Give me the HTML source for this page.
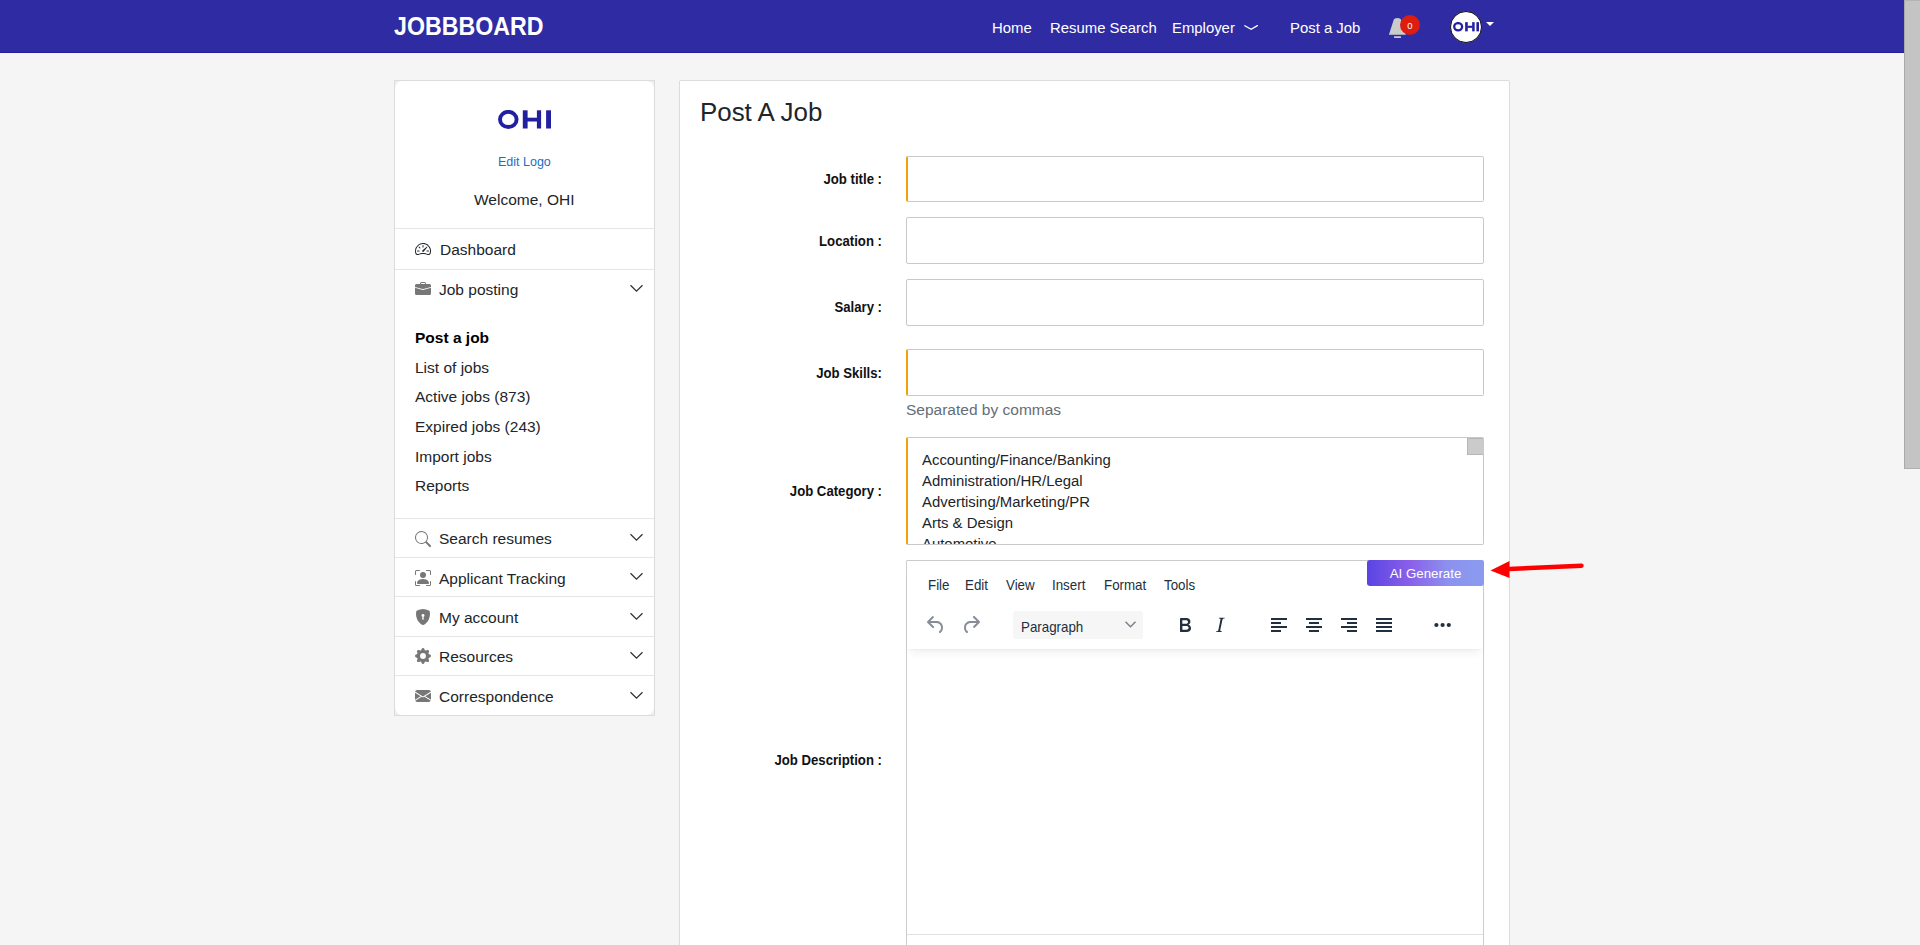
<!DOCTYPE html>
<html><head><meta charset="utf-8">
<style>
*{box-sizing:border-box;margin:0;padding:0}
html,body{width:1920px;height:945px;overflow:hidden;background:#f5f5f5;font-family:"Liberation Sans",sans-serif;color:#212529}
.a{position:absolute;white-space:nowrap}
#nav{position:absolute;left:0;top:0;width:1904px;height:53px;background:#2f2ca3;border-bottom:1px solid #2320a0}
#sb{position:absolute;left:1904px;top:0;width:17px;height:945px;background:#f5f5f5}
#thumb{position:absolute;left:1904px;top:0;width:16px;height:469px;background:#c4c4c4;border-left:1px solid #a9a9a9;border-bottom:1px solid #b0b0b0;border-top:1px solid #b4b4b4}
.nl{color:#fff;font-size:15.5px;line-height:20px;transform:scaleX(0.96);transform-origin:0 0}
#side{position:absolute;left:394px;top:80px;width:261px;height:636px;border:1px solid #dcdcdc;background:#f0f0f0}
#sidein{position:absolute;left:0;top:0;width:259px;height:634px;background:#fff;border-radius:8px}
.div{position:absolute;left:395px;width:259px;height:1px;background:#e6e6e6}
.si{font-size:15.5px;line-height:20px;color:#212529}
#main{position:absolute;left:679px;top:80px;width:831px;height:900px;border:1px solid #dcdcdc;background:#fff;border-radius:2px}
.lb{font-size:14.8px;font-weight:700;line-height:18px;color:#111;text-align:right;transform:scaleX(0.89);transform-origin:100% 0}
.inp{position:absolute;left:906px;width:578px;height:46px;border:1px solid #c9c9c9;border-radius:2px;background:#fff}
.or{border-left:2px solid #f2a10a}
.opt{font-size:14.9px;line-height:21px;color:#212529}
.mn{font-size:14.2px;line-height:18px;color:#222f3e;transform:scaleX(0.94);transform-origin:0 0}
</style></head><body>
<div id="nav"></div>
<div class="a" style="left:394px;top:11px;font-size:26.5px;font-weight:700;color:#fff;line-height:30px;transform:scaleX(0.875);transform-origin:0 0">JOBBBOARD</div>
<div class="a nl" style="left:992px;top:18px">Home</div>
<div class="a nl" style="left:1050px;top:18px">Resume Search</div>
<div class="a nl" style="left:1172px;top:18px">Employer</div>
<svg class="a" style="left:1244px;top:24px" width="15" height="8" viewBox="0 0 15 8"><path d="M0.8 1.8 L7.1 5.3 L13.4 1.6" stroke="#fff" stroke-width="1.3" fill="none" stroke-linecap="round"/></svg>
<div class="a nl" style="left:1290px;top:18px">Post a Job</div>


<!-- bell + badge -->
<svg class="a" style="left:1388px;top:17px" width="19" height="22" viewBox="0 0 19 22"><path d="M5.8 2.6 Q6.3 0.9 9.4 0.9 Q12.5 0.9 13 2.6 L17.9 17.7 L0.9 17.7 Z" fill="#cbcbcb"/><rect x="6" y="19.3" width="7" height="1.6" rx="0.5" fill="#cbcbcb"/></svg>
<div class="a" style="left:1400px;top:15px;width:20px;height:20px;border-radius:50%;background:#dc1d10;color:#fff;font-size:9.5px;line-height:22px;text-align:center">0</div>
<!-- avatar -->
<div class="a" style="left:1450px;top:11px;width:32px;height:32px;border-radius:50%;background:#fff;border:1px solid #111"></div>
<svg class="a" style="left:1453px;top:22px" width="26" height="9.50" viewBox="0 0 52 19"><g fill="#22209e"><ellipse cx="10.3" cy="9.45" rx="7.9" ry="7.25" fill="none" stroke="#22209e" stroke-width="4.6"/><rect x="24.3" y="0.3" width="5.2" height="18.4"/><rect x="38.3" y="0.3" width="5" height="18.4"/><rect x="29" y="7.5" width="10" height="4.2"/><rect x="46.8" y="0.3" width="5.2" height="18.4"/></g></svg>
<svg class="a" style="left:1486px;top:22px" width="8" height="4" viewBox="0 0 8 4"><path d="M0 0 L8 0 L4 4 Z" fill="#fff"/></svg>
<div id="sb"></div><div id="thumb"></div>

<div id="side"><div id="sidein"></div></div>
<div class="div" style="top:228px"></div>
<div class="div" style="top:269px"></div>
<div class="div" style="top:518px"></div>
<div class="div" style="top:557px"></div>
<div class="div" style="top:596px"></div>
<div class="div" style="top:636px"></div>
<div class="div" style="top:675px"></div>

<svg class="a" style="left:498px;top:110.4px" width="53.00" height="19.00" viewBox="0 0 53 19"><g fill="#22209e"><ellipse cx="10.3" cy="9.45" rx="8.3" ry="7.6" fill="none" stroke="#22209e" stroke-width="3.9"/><rect x="24.8" y="0.3" width="4.8" height="18.2"/><rect x="38.9" y="0.3" width="4.2" height="18.2"/><rect x="29" y="7.7" width="10.5" height="3.8"/><rect x="48.1" y="0.3" width="4.9" height="18.2"/></g></svg>
<div class="a" style="left:498px;top:154px;font-size:12.5px;color:#1a6dc9;line-height:16px">Edit Logo</div>
<div class="a si" style="left:474px;top:190px">Welcome, OHI</div>

<div class="a si" style="left:440px;top:240px">Dashboard</div>
<div class="a si" style="left:439px;top:280px">Job posting</div>
<div class="a si" style="left:415px;top:328px;font-weight:700;color:#000">Post a job</div>
<div class="a si" style="left:415px;top:358px">List of jobs</div>
<div class="a si" style="left:415px;top:387px">Active jobs (873)</div>
<div class="a si" style="left:415px;top:417px">Expired jobs (243)</div>
<div class="a si" style="left:415px;top:447px">Import jobs</div>
<div class="a si" style="left:415px;top:476px">Reports</div>
<div class="a si" style="left:439px;top:529px">Search resumes</div>
<div class="a si" style="left:439px;top:569px">Applicant Tracking</div>
<div class="a si" style="left:439px;top:608px">My account</div>
<div class="a si" style="left:439px;top:647px">Resources</div>
<div class="a si" style="left:439px;top:687px">Correspondence</div>


<svg class="a" style="left:415px;top:241px" width="16" height="16" viewBox="0 0 16 16" fill="#212529"><path d="M8 4a.5.5 0 0 1 .5.5V6a.5.5 0 0 1-1 0V4.5A.5.5 0 0 1 8 4zM3.732 5.732a.5.5 0 0 1 .707 0l.915.914a.5.5 0 1 1-.708.708l-.914-.915a.5.5 0 0 1 0-.707zM2 10a.5.5 0 0 1 .5-.5h1.586a.5.5 0 0 1 0 1H2.5A.5.5 0 0 1 2 10zm9.5 0a.5.5 0 0 1 .5-.5h1.5a.5.5 0 0 1 0 1H12a.5.5 0 0 1-.5-.5zm.754-4.246a.389.389 0 0 0-.527-.02L7.547 9.31a.91.91 0 1 0 1.302 1.258l3.434-4.297a.389.389 0 0 0-.029-.518z"/><path fill-rule="evenodd" d="M0 10a8 8 0 1 1 15.547 2.661c-.442 1.253-1.845 1.602-2.932 1.25C11.309 13.488 9.475 13 8 13c-1.474 0-3.31.488-4.615.911-1.087.352-2.49.003-2.932-1.25A7.988 7.988 0 0 1 0 10zm8-7a7 7 0 0 0-6.603 9.329c.203.575.923.876 1.68.63C4.397 12.533 6.358 12 8 12s3.604.532 4.923.96c.757.245 1.477-.056 1.68-.631A7 7 0 0 0 8 3z"/></svg>
<svg class="a" style="left:415px;top:281px" width="16" height="16" viewBox="0 0 16 16" fill="#777"><path d="M6.5 1A1.5 1.5 0 0 0 5 2.5V3H1.5A1.5 1.5 0 0 0 0 4.5v1.384l7.614 2.03a1.5 1.5 0 0 0 .772 0L16 5.884V4.5A1.5 1.5 0 0 0 14.5 3H11v-.5A1.5 1.5 0 0 0 9.5 1h-3zm0 1h3a.5.5 0 0 1 .5.5V3H6v-.5a.5.5 0 0 1 .5-.5z"/><path d="M0 12.5A1.5 1.5 0 0 0 1.5 14h13a1.5 1.5 0 0 0 1.5-1.5V6.85L8.129 8.947a.5.5 0 0 1-.258 0L0 6.85v5.65z"/></svg>
<svg class="a" style="left:415px;top:530.5px" width="16" height="16" viewBox="0 0 16 16" fill="#777"><path d="M11.742 10.344a6.5 6.5 0 1 0-1.397 1.398h-.001c.03.04.062.078.098.115l3.85 3.85a1 1 0 0 0 1.415-1.414l-3.85-3.85a1.007 1.007 0 0 0-.115-.1zM12 6.5a5.5 5.5 0 1 1-11 0 5.5 5.5 0 0 1 11 0z"/></svg>
<svg class="a" style="left:415px;top:570px" width="16" height="16" viewBox="0 0 16 16" fill="#777"><path d="M1.5 1a.5.5 0 0 0-.5.5v3a.5.5 0 0 1-1 0v-3A1.5 1.5 0 0 1 1.5 0h3a.5.5 0 0 1 0 1h-3zM11 .5a.5.5 0 0 1 .5-.5h3A1.5 1.5 0 0 1 16 1.5v3a.5.5 0 0 1-1 0v-3a.5.5 0 0 0-.5-.5h-3a.5.5 0 0 1-.5-.5zM.5 11a.5.5 0 0 1 .5.5v3a.5.5 0 0 0 .5.5h3a.5.5 0 0 1 0 1h-3A1.5 1.5 0 0 1 0 14.5v-3a.5.5 0 0 1 .5-.5zm15 0a.5.5 0 0 1 .5.5v3a1.5 1.5 0 0 1-1.5 1.5h-3a.5.5 0 0 1 0-1h3a.5.5 0 0 0 .5-.5v-3a.5.5 0 0 1 .5-.5z"/><path d="M3 14s-1 0-1-1 1-4 6-4 6 3 6 4-1 1-1 1H3zm8-9a3 3 0 1 1-6 0 3 3 0 0 1 6 0z"/></svg>
<svg class="a" style="left:415px;top:608.5px" width="16" height="16" viewBox="0 0 16 16" fill="#777"><path fill-rule="evenodd" d="M8 0c-.69 0-1.843.265-2.928.56-1.11.3-2.229.655-2.887.87a1.54 1.54 0 0 0-1.044 1.262c-.596 4.477.787 7.795 2.465 9.99a11.777 11.777 0 0 0 2.517 2.453c.386.273.744.482 1.048.625.28.132.581.24.829.24s.548-.108.829-.24a7.159 7.159 0 0 0 1.048-.625 11.775 11.775 0 0 0 2.517-2.453c1.678-2.195 3.061-5.513 2.465-9.99a1.541 1.541 0 0 0-1.044-1.263 62.467 62.467 0 0 0-2.887-.87C9.843.266 8.69 0 8 0zm0 5a1.5 1.5 0 0 1 .5 2.915l.385 1.99a.5.5 0 0 1-.491.595h-.788a.5.5 0 0 1-.49-.595l.384-1.99A1.5 1.5 0 0 1 8 5z"/></svg>
<svg class="a" style="left:415px;top:648px" width="16" height="16" viewBox="0 0 16 16" fill="#777"><path d="M9.405 1.05c-.413-1.4-2.397-1.4-2.81 0l-.1.34a1.464 1.464 0 0 1-2.105.872l-.31-.17c-1.283-.698-2.686.705-1.987 1.987l.169.311c.446.82.023 1.841-.872 2.105l-.34.1c-1.4.413-1.4 2.397 0 2.81l.34.1a1.464 1.464 0 0 1 .872 2.105l-.17.31c-.698 1.283.705 2.686 1.987 1.987l.311-.169a1.464 1.464 0 0 1 2.105.872l.1.34c.413 1.4 2.397 1.4 2.81 0l.1-.34a1.464 1.464 0 0 1 2.105-.872l.31.17c1.283.698 2.686-.705 1.987-1.987l-.169-.311a1.464 1.464 0 0 1 .872-2.105l.34-.1c1.4-.413 1.4-2.397 0-2.81l-.34-.1a1.464 1.464 0 0 1-.872-2.105l.17-.31c.698-1.283-.705-2.686-1.987-1.987l-.311.169a1.464 1.464 0 0 1-2.105-.872l-.1-.34zM8 10.93a2.929 2.929 0 1 1 0-5.86 2.929 2.929 0 0 1 0 5.858z"/></svg>
<svg class="a" style="left:415px;top:688px" width="16" height="16" viewBox="0 0 16 16" fill="#777"><path d="M.05 3.555A2 2 0 0 1 2 2h12a2 2 0 0 1 1.95 1.555L8 8.414.05 3.555ZM0 4.697v7.104l5.803-3.558L0 4.697ZM6.761 8.83l-6.57 4.027A2 2 0 0 0 2 14h12a2 2 0 0 0 1.808-1.144l-6.57-4.027L8 9.586l-1.239-.757Zm3.436-.586L16 11.801V4.697l-5.803 3.546Z"/></svg>
<svg class="a" style="left:629px;top:283.9px" width="15" height="9" viewBox="0 0 15 9"><path d="M1.5 1.2 L7.5 7.2 L13.5 1.2" stroke="#333" stroke-width="1.3" fill="none"/></svg>
<svg class="a" style="left:629px;top:532.8px" width="15" height="9" viewBox="0 0 15 9"><path d="M1.5 1.2 L7.5 7.2 L13.5 1.2" stroke="#333" stroke-width="1.3" fill="none"/></svg>
<svg class="a" style="left:629px;top:572.3px" width="15" height="9" viewBox="0 0 15 9"><path d="M1.5 1.2 L7.5 7.2 L13.5 1.2" stroke="#333" stroke-width="1.3" fill="none"/></svg>
<svg class="a" style="left:629px;top:611.9px" width="15" height="9" viewBox="0 0 15 9"><path d="M1.5 1.2 L7.5 7.2 L13.5 1.2" stroke="#333" stroke-width="1.3" fill="none"/></svg>
<svg class="a" style="left:629px;top:650.8px" width="15" height="9" viewBox="0 0 15 9"><path d="M1.5 1.2 L7.5 7.2 L13.5 1.2" stroke="#333" stroke-width="1.3" fill="none"/></svg>
<svg class="a" style="left:629px;top:690.5px" width="15" height="9" viewBox="0 0 15 9"><path d="M1.5 1.2 L7.5 7.2 L13.5 1.2" stroke="#333" stroke-width="1.3" fill="none"/></svg>
<div id="main"></div>
<div class="a" style="left:700px;top:97px;font-size:25.9px;line-height:30px;color:#212529">Post A Job</div>
<div class="a lb" style="left:700px;width:182px;top:170px">Job title :</div>
<div class="a lb" style="left:700px;width:182px;top:232px">Location :</div>
<div class="a lb" style="left:700px;width:182px;top:298px">Salary :</div>
<div class="a lb" style="left:700px;width:182px;top:364px">Job Skills:</div>
<div class="a lb" style="left:700px;width:182px;top:482px">Job Category :</div>
<div class="a lb" style="left:600px;width:282px;top:751px">Job Description :</div>

<div class="inp or" style="top:156px"></div>
<div class="inp" style="top:217px;height:47px"></div>
<div class="inp" style="top:279px;height:47px"></div>
<div class="inp or" style="top:349px;height:47px"></div>
<div class="a" style="left:906px;top:401px;font-size:15.5px;line-height:18px;color:#646d78">Separated by commas</div>
<div class="inp or" style="top:437px;height:108px;overflow:hidden">
  <div class="a opt" style="left:14px;top:12px">Accounting/Finance/Banking<br>Administration/HR/Legal<br>Advertising/Marketing/PR<br>Arts &amp; Design<br>Automotive</div>
  <div class="a" style="left:559px;top:0;width:17px;height:17px;background:#cbcbcb;border:1px solid #b6b6b6;border-right:0"></div>
</div>

<div class="a" style="left:906px;top:560px;width:578px;height:420px;border:1px solid #ccc;border-radius:1px;background:#fff"></div>
<div class="a" style="left:907px;top:561px;width:576px;height:88px;background:#fff;box-shadow:0 2px 2px -2px rgba(34,47,62,.1),0 8px 8px -4px rgba(34,47,62,.07)"></div>
<div class="a" style="left:907px;top:934px;width:576px;height:1px;background:#e0e0e0"></div>
<div class="a mn" style="left:928px;top:576px">File</div>
<div class="a mn" style="left:965px;top:576px">Edit</div>
<div class="a mn" style="left:1006px;top:576px">View</div>
<div class="a mn" style="left:1052px;top:576px">Insert</div>
<div class="a mn" style="left:1104px;top:576px">Format</div>
<div class="a mn" style="left:1164px;top:576px">Tools</div>
<svg class="a" style="left:923.7px;top:612.7px" width="24" height="24" viewBox="0 0 24 24" fill="#878d95"><path d="M6.4 8H12c3.7 0 6.2 2 6.8 5.1.6 2.7-.4 5.6-2.3 6.8a1 1 0 0 1-1-1.8c1.1-.6 1.8-2.7 1.4-4.6-.5-2.2-2.1-3.5-4.9-3.5H6.4l3.3 3.3a1 1 0 1 1-1.4 1.4l-5-5a1 1 0 0 1 0-1.4l5-5a1 1 0 0 1 1.4 1.4L6.4 8Z"/></svg>
<svg class="a" style="left:959.1px;top:612.7px" width="24" height="24" viewBox="0 0 24 24" fill="#878d95"><path d="M17.6 10H12c-2.8 0-4.4 1.4-4.9 3.5-.4 2 .3 4 1.4 4.6a1 1 0 1 1-1 1.8c-2-1.2-2.9-4.1-2.3-6.8.6-3 3-5.1 6.8-5.1h5.6l-3.3-3.3a1 1 0 1 1 1.4-1.4l5 5a1 1 0 0 1 0 1.4l-5 5a1 1 0 0 1-1.4-1.4l3.300-3.300Z"/></svg>
<div class="a" style="left:1013px;top:611px;width:130px;height:28px;background:#f6f6f7;border-radius:3px"></div>
<div class="a mn" style="left:1021px;top:618px">Paragraph</div>
<svg class="a" style="left:1124px;top:620px" width="13" height="9" viewBox="0 0 13 9"><path d="M1.5 1.8 L6.5 6.8 L11.5 1.8" stroke="#7a828c" stroke-width="1.5" fill="none"/></svg>
<svg class="a" style="left:1173px;top:613px" width="24" height="24" viewBox="0 0 24 24" fill="#222f3e"><path d="M7.8 19c-.3 0-.5 0-.6-.2l-.2-.5V5.7c0-.2 0-.4.2-.5l.6-.2h5c1.5 0 2.7.3 3.5 1 .7.6 1.1 1.4 1.1 2.5a3 3 0 0 1-.6 1.9c-.4.6-1 1-1.6 1.2.4.1.9.3 1.3.6s.8.7 1 1.2c.4.4.5 1 .5 1.6 0 1.3-.4 2.3-1.3 3-.8.7-2.1 1-3.8 1H7.8Zm5-8.3c.6 0 1.2-.1 1.6-.5.4-.3.6-.7.6-1.3 0-1.1-.8-1.7-2.3-1.7H9.3v3.5h3.4Zm.5 6c.7 0 1.3-.1 1.700-.4.4-.4.6-.9.6-1.5s-.2-1-.7-1.4c-.4-.3-1-.4-2-.4H9.400v3.800h4Z"/></svg>
<svg class="a" style="left:1208px;top:613px" width="24" height="24" viewBox="0 0 24 24" fill="#222f3e"><path d="m16.7 4.7-.1.9h-.3c-.6 0-1 0-1.4.3-.3.3-.4.6-.5 1.1l-2.1 9.8v.6c0 .5.4.8 1.4.8h.2l-.2.8H8l.2-.8h.2c1.1 0 1.8-.5 2-1.5l2-9.8.1-.5c0-.6-.4-.8-1.4-.8h-.3l.2-.9h5.8Z"/></svg>
<svg class="a" style="left:1271px;top:617px" width="16" height="16" viewBox="0 0 16 16" fill="#222f3e"><rect x="0" y="1" width="16" height="2"/><rect x="0" y="5" width="10" height="2"/><rect x="0" y="9" width="16" height="2"/><rect x="0" y="13" width="10" height="2"/></svg>
<svg class="a" style="left:1306px;top:617px" width="16" height="16" viewBox="0 0 16 16" fill="#222f3e"><rect x="0" y="1" width="16" height="2"/><rect x="3" y="5" width="10" height="2"/><rect x="0" y="9" width="16" height="2"/><rect x="3" y="13" width="10" height="2"/></svg>
<svg class="a" style="left:1341px;top:617px" width="16" height="16" viewBox="0 0 16 16" fill="#222f3e"><rect x="0" y="1" width="16" height="2"/><rect x="6" y="5" width="10" height="2"/><rect x="0" y="9" width="16" height="2"/><rect x="6" y="13" width="10" height="2"/></svg>
<svg class="a" style="left:1376px;top:617px" width="16" height="16" viewBox="0 0 16 16" fill="#222f3e"><rect x="0" y="1" width="16" height="2"/><rect x="0" y="5" width="16" height="2"/><rect x="0" y="9" width="16" height="2"/><rect x="0" y="13" width="16" height="2"/></svg>
<svg class="a" style="left:1434px;top:621px" width="18" height="8" viewBox="0 0 18 8" fill="#222f3e"><circle cx="2.4" cy="4" r="2.1"/><circle cx="8.6" cy="4" r="2.1"/><circle cx="14.8" cy="4" r="2.1"/></svg>
<div class="a" style="left:1367px;top:560px;width:117px;height:26px;border-radius:3px;background:linear-gradient(90deg,#5944e4 0%,#8a5fe8 36%,#8c92ee 70%,#8a9bee 100%);color:#fff;font-size:13.3px;line-height:27px;text-align:center">AI Generate</div>
<svg class="a" style="left:1485px;top:555px" width="105" height="28" viewBox="0 0 105 28"><path d="M24 14 L96.5 10.7" stroke="#f00" stroke-width="4.4" stroke-linecap="round"/><path d="M5.5 15.5 L24.5 6 L24.5 23 Z" fill="#f00"/></svg>
</body></html>
